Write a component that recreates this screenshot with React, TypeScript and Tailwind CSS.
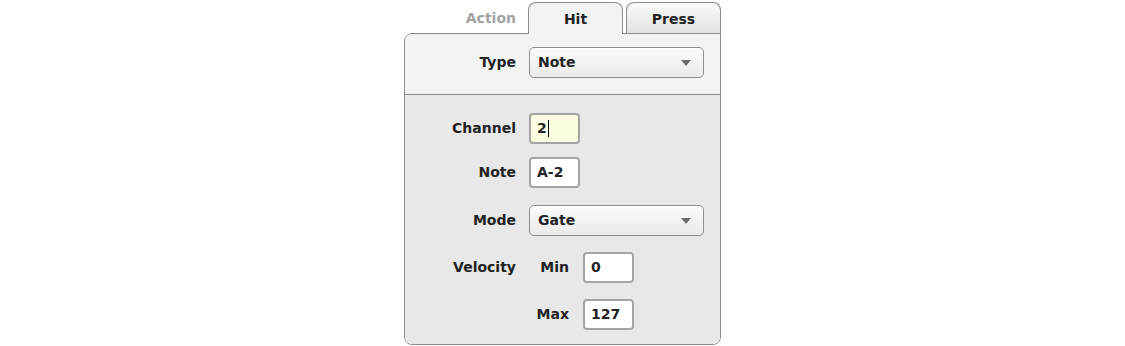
import React from 'react'

const font = { fontFamily: '"DejaVu Sans", "Liberation Sans", sans-serif' }

function Arrow() {
  return (
    <svg width="10" height="6" viewBox="0 0 10 6" className="block">
      <path d="M0 0 H10 L5 6 Z" fill="#6b6b6b" />
    </svg>
  )
}

function Select({ value }: { value: string }) {
  return (
    <div className="flex h-[31px] w-[175px] items-center justify-between rounded-[5px] border border-[#8e8e8e] bg-gradient-to-b from-[#fbfbfb] to-[#ebebeb] pl-[8px] pr-[12px] shadow-[inset_0_1px_0_#ffffff]">
      <span>{value}</span>
      <Arrow />
    </div>
  )
}

function Field({ value, focused }: { value: string; focused?: boolean }) {
  return (
    <div
      className={`flex h-[31px] w-[51px] items-center rounded-[4px] border-2 border-[#a4a4a4] pl-[6px] ${
        focused ? 'bg-[#fdfde1]' : 'bg-white'
      }`}
    >
      <span>{value}</span>
      {focused && <span className="ml-px h-[17px] w-px bg-black" />}
    </div>
  )
}

function Row({ label, children }: { label: string; children: React.ReactNode }) {
  return (
    <div className="flex items-center gap-[13px]">
      <div className="w-[111px] text-right">{label}</div>
      {children}
    </div>
  )
}

export default function App() {
  return (
    <div className="flex h-[346px] w-full justify-center bg-white text-[14px] font-bold text-[#222]" style={font}>
      <div className="w-[317px] pt-[2px]">
        {/* tabs */}
        <div className="flex h-[31px] items-stretch">
          <div className="flex flex-1 items-center justify-end pr-[12px] pt-[2px] font-semibold text-[#a3a3a3]">Action</div>
          <div className="relative z-10 -mb-px flex w-[95px] items-center justify-center rounded-t-[8px] border border-b-0 border-[#8c8c8c] bg-[#f3f3f3] pt-[2px]">
            Hit
          </div>
          <div className="ml-[3px] flex w-[95px] items-center justify-center rounded-t-[8px] border border-b-0 border-[#8c8c8c] bg-gradient-to-b from-[#fafafa] to-[#e2e2e2] pt-[2px]">
            Press
          </div>
        </div>

        {/* panel */}
        <div className="h-[312px] overflow-hidden rounded-b-[8px] rounded-tl-[8px] border border-[#8c8c8c]">
          <div className="h-[60px] bg-[#f3f3f3] pt-[13px]">
            <Row label="Type">
              <Select value="Note" />
            </Row>
          </div>
          <div className="flex h-full flex-col border-t border-[#8c8c8c] bg-[#e8e8e8] pt-[18px]">
            <Row label="Channel">
              <Field value="2" focused />
            </Row>
            <div className="mt-[13px]">
              <Row label="Note">
                <Field value="A-2" />
              </Row>
            </div>
            <div className="mt-[17px]">
              <Row label="Mode">
                <Select value="Gate" />
              </Row>
            </div>
            <div className="mt-[16px]">
              <Row label="Velocity">
                <div className="flex items-center gap-[14px]">
                  <div className="w-[40px] text-right">Min</div>
                  <Field value="0" />
                </div>
              </Row>
            </div>
            <div className="mt-[16px]">
              <Row label="">
                <div className="flex items-center gap-[14px]">
                  <div className="w-[40px] text-right">Max</div>
                  <Field value="127" />
                </div>
              </Row>
            </div>
          </div>
        </div>
      </div>
    </div>
  )
}
